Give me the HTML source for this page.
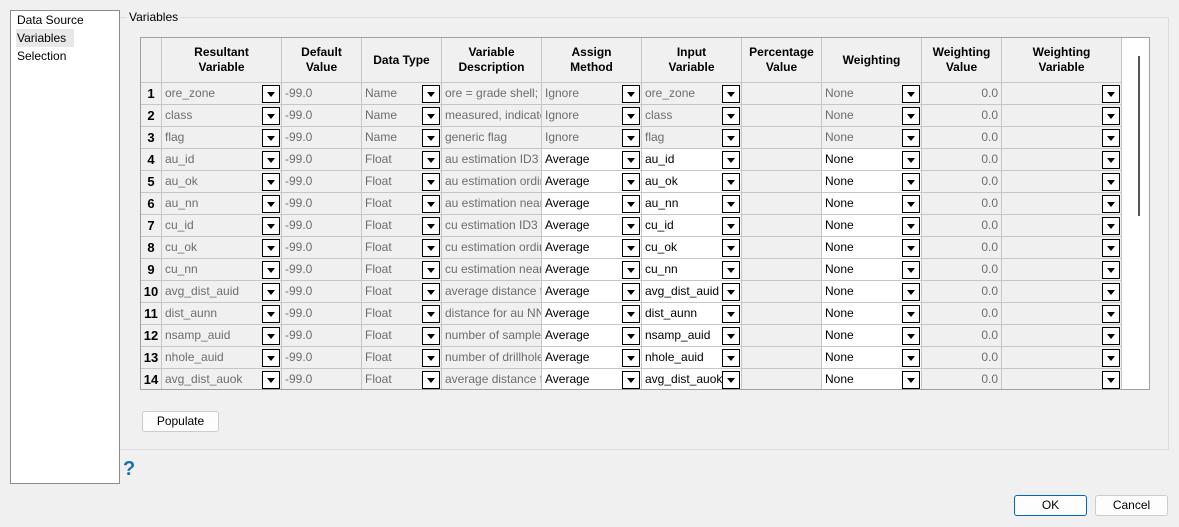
<!DOCTYPE html>
<html><head><meta charset="utf-8"><style>
*{box-sizing:border-box;margin:0;padding:0}
body{width:1179px;height:527px;background:#f0f0f0;font-family:"Liberation Sans",sans-serif;font-size:12px;position:relative;overflow:hidden;color:#000}
.abs{position:absolute}
#list{left:10px;top:10px;width:110px;height:474px;background:#fff;border:1px solid #8a8a8f}
#list div{padding-left:6px;height:18px;line-height:18px}
#tbl{left:140px;top:37px;width:1010px;height:353px;border:1px solid #a0a0a0;background:#fff;overflow:hidden}
#g{position:absolute;left:0;top:0;display:grid;grid-template-columns:20px 119px 79px 79px 99px 99px 99px 79px 99px 79px 119px;grid-template-rows:44px;grid-auto-rows:21px;gap:1px;background:#c6c6c6;width:981px;padding-right:1px}
#g>div{background:#f0f0f0;position:relative;line-height:21px;padding-left:3px;color:#6d6d6d;white-space:nowrap;overflow:hidden}
#g>div.h{font-weight:bold;color:#000;text-align:center;display:flex;align-items:center;justify-content:center;line-height:15px;padding:0}
#g>div.n{font-weight:bold;color:#000;text-align:center;padding:0;font-size:13px}
#g>div.e{background:#fff;color:#000}
#g>div.r{text-align:right;padding-right:3px}
.d::after{content:"";position:absolute;right:1px;top:2px;width:18px;height:18px;border:1px solid #000;background:#fff;box-sizing:border-box}
.d::before{content:"";position:absolute;right:6px;top:9px;border-left:4px solid transparent;border-right:4px solid transparent;border-top:5px solid #000;z-index:2}
#sb{left:1138px;top:56px;width:2px;height:160px;background:#555}
.btn{border:1px solid #ccc;background:#fdfdfd;border-radius:3px;text-align:center;line-height:18px}
</style></head><body>
<div id="list" class="abs"><div>Data Source</div><div style="background:#e8e8e8;width:58px;margin-left:5px;padding-left:1px">Variables</div><div>Selection</div></div>
<div class="abs" style="left:120px;top:17px;width:1049px;height:433px;border-top:1px solid #dcdcdc;border-right:1px solid #dcdcdc;border-bottom:1px solid #dcdcdc"></div>
<div class="abs" style="left:127px;top:10px;background:#f0f0f0;padding:0 2px">Variables</div>
<div id="tbl" class="abs"><div id="g">
<div class="h"></div><div class="h">Resultant<br>Variable</div><div class="h">Default<br>Value</div><div class="h">Data Type</div><div class="h">Variable<br>Description</div><div class="h">Assign<br>Method</div><div class="h">Input<br>Variable</div><div class="h">Percentage<br>Value</div><div class="h">Weighting</div><div class="h">Weighting<br>Value</div><div class="h">Weighting<br>Variable</div>

<div class="n">1</div><div class="d">ore_zone</div><div>-99.0</div><div class="d">Name</div><div>ore = grade shell; w</div><div class="d">Ignore</div><div class="d">ore_zone</div><div></div><div class="d">None</div><div class="r">0.0</div><div class="d"></div>
<div class="n">2</div><div class="d">class</div><div>-99.0</div><div class="d">Name</div><div>measured, indicated</div><div class="d">Ignore</div><div class="d">class</div><div></div><div class="d">None</div><div class="r">0.0</div><div class="d"></div>
<div class="n">3</div><div class="d">flag</div><div>-99.0</div><div class="d">Name</div><div>generic flag</div><div class="d">Ignore</div><div class="d">flag</div><div></div><div class="d">None</div><div class="r">0.0</div><div class="d"></div>
<div class="n">4</div><div class="d">au_id</div><div>-99.0</div><div class="d">Float</div><div>au estimation ID3</div><div class="d e">Average</div><div class="d e">au_id</div><div></div><div class="d e">None</div><div class="r">0.0</div><div class="d"></div>
<div class="n">5</div><div class="d">au_ok</div><div>-99.0</div><div class="d">Float</div><div>au estimation ordinary</div><div class="d e">Average</div><div class="d e">au_ok</div><div></div><div class="d e">None</div><div class="r">0.0</div><div class="d"></div>
<div class="n">6</div><div class="d">au_nn</div><div>-99.0</div><div class="d">Float</div><div>au estimation nearest</div><div class="d e">Average</div><div class="d e">au_nn</div><div></div><div class="d e">None</div><div class="r">0.0</div><div class="d"></div>
<div class="n">7</div><div class="d">cu_id</div><div>-99.0</div><div class="d">Float</div><div>cu estimation ID3</div><div class="d e">Average</div><div class="d e">cu_id</div><div></div><div class="d e">None</div><div class="r">0.0</div><div class="d"></div>
<div class="n">8</div><div class="d">cu_ok</div><div>-99.0</div><div class="d">Float</div><div>cu estimation ordinary</div><div class="d e">Average</div><div class="d e">cu_ok</div><div></div><div class="d e">None</div><div class="r">0.0</div><div class="d"></div>
<div class="n">9</div><div class="d">cu_nn</div><div>-99.0</div><div class="d">Float</div><div>cu estimation nearest</div><div class="d e">Average</div><div class="d e">cu_nn</div><div></div><div class="d e">None</div><div class="r">0.0</div><div class="d"></div>
<div class="n">10</div><div class="d">avg_dist_auid</div><div>-99.0</div><div class="d">Float</div><div>average distance for</div><div class="d e">Average</div><div class="d e">avg_dist_auid</div><div></div><div class="d e">None</div><div class="r">0.0</div><div class="d"></div>
<div class="n">11</div><div class="d">dist_aunn</div><div>-99.0</div><div class="d">Float</div><div>distance for au NN</div><div class="d e">Average</div><div class="d e">dist_aunn</div><div></div><div class="d e">None</div><div class="r">0.0</div><div class="d"></div>
<div class="n">12</div><div class="d">nsamp_auid</div><div>-99.0</div><div class="d">Float</div><div>number of samples</div><div class="d e">Average</div><div class="d e">nsamp_auid</div><div></div><div class="d e">None</div><div class="r">0.0</div><div class="d"></div>
<div class="n">13</div><div class="d">nhole_auid</div><div>-99.0</div><div class="d">Float</div><div>number of drillholes</div><div class="d e">Average</div><div class="d e">nhole_auid</div><div></div><div class="d e">None</div><div class="r">0.0</div><div class="d"></div>
<div class="n">14</div><div class="d">avg_dist_auok</div><div>-99.0</div><div class="d">Float</div><div>average distance for</div><div class="d e">Average</div><div class="d e">avg_dist_auok</div><div></div><div class="d e">None</div><div class="r">0.0</div><div class="d"></div>
</div></div>
<div id="sb" class="abs"></div>
<div class="abs btn" style="left:142px;top:411px;width:77px;height:21px">Populate</div>
<div class="abs" style="left:123px;top:458px;color:#1a6fa8;font-weight:bold;font-size:20px">?</div>
<div class="abs btn" style="left:1014px;top:495px;width:73px;height:21px;border-color:#0067c0">OK</div>
<div class="abs btn" style="left:1095px;top:495px;width:73px;height:21px">Cancel</div>
</body></html>
